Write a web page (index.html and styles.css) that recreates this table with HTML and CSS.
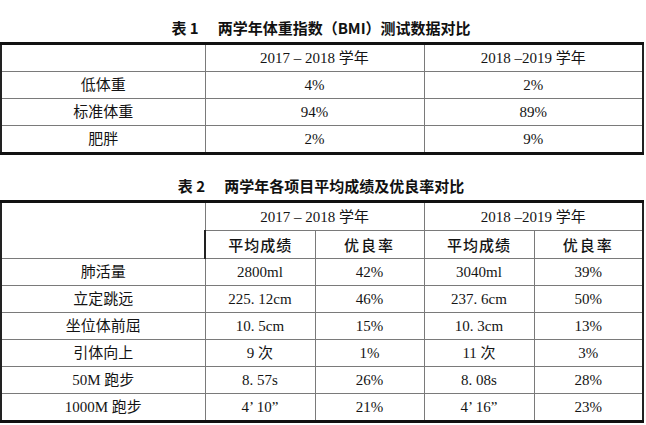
FILE: index.html
```html
<!DOCTYPE html>
<html lang="zh-CN">
<head>
<meta charset="utf-8">
<title>两学年体测数据对比</title>
<link rel="stylesheet" href="styles.css">
</head>
<body>
<div class="page">
  <div class="caption caption-1"><span class="cap-no">表 1</span><span class="cap-text">两学年体重指数（BMI）测试数据对比</span></div>
  <table class="data t1">
    <colgroup><col class="c-name"><col class="c-year"><col class="c-year"></colgroup>
    <tr class="head"><td></td><td>2017 – 2018 学年</td><td>2018 –2019 学年</td></tr>
    <tr><td>低体重</td><td>4%</td><td>2%</td></tr>
    <tr><td>标准体重</td><td>94%</td><td>89%</td></tr>
    <tr><td>肥胖</td><td>2%</td><td>9%</td></tr>
  </table>

  <div class="caption caption-2"><span class="cap-no">表 2</span><span class="cap-text">两学年各项目平均成绩及优良率对比</span></div>
  <table class="data t2">
    <colgroup><col class="c-name"><col class="c-sub"><col class="c-sub2"><col class="c-sub"><col class="c-sub2"></colgroup>
    <tr class="head"><td rowspan="2"></td><td colspan="2">2017 – 2018 学年</td><td colspan="2">2018 –2019 学年</td></tr>
    <tr class="head sub"><td class="hz">平均成绩</td><td class="hz sp">优良率</td><td class="hz">平均成绩</td><td class="hz sp">优良率</td></tr>
    <tr><td>肺活量</td><td>2800ml</td><td>42%</td><td>3040ml</td><td>39%</td></tr>
    <tr><td>立定跳远</td><td>225. 12cm</td><td>46%</td><td>237. 6cm</td><td>50%</td></tr>
    <tr><td>坐位体前屈</td><td>10. 5cm</td><td>15%</td><td>10. 3cm</td><td>13%</td></tr>
    <tr><td>引体向上</td><td>9 次</td><td>1%</td><td>11 次</td><td>3%</td></tr>
    <tr><td>50M 跑步</td><td>8. 57s</td><td>26%</td><td>8. 08s</td><td>28%</td></tr>
    <tr><td>1000M 跑步</td><td>4’ 10”</td><td>21%</td><td>4’ 16”</td><td>23%</td></tr>
  </table>
</div>
</body>
</html>
```

FILE: styles.css
```css
html, body {
  margin: 0;
  padding: 0;
  background: #ffffff;
}

.page {
  width: 642px;
  padding-top: 14px;
  font-family: "Liberation Serif", "Noto Sans CJK SC", serif;
  color: #141414;
}

.caption {
  height: 28px;
  line-height: 28px;
  text-align: center;
  font-family: "Noto Sans CJK SC", sans-serif;
  font-weight: 700;
  font-size: 15px;
  color: #111;
}

.caption .cap-no {
  margin-right: 19px;
}

.caption-2 {
  margin-top: 17px;
}

.data {
  width: 642px;
  border-collapse: collapse;
  table-layout: fixed;
  border-top: 3px solid #111;
  border-bottom: 3px solid #111;
  border-left: 2px solid #222;
  border-right: 2px solid #222;
  font-size: 15px;
}

.data td {
  border: 1px solid #7a7a7a;
  padding: 0;
  height: 26px;
  text-align: center;
  vertical-align: middle;
  line-height: 18px;
}

.t2 .head td {
  height: 27px;
}

.data tr:first-child td {
  border-top: 3px solid #111;
}

.data tr:last-child td {
  border-bottom: 3px solid #111;
}

.data td:first-child {
  border-left: 2px solid #222;
}

.data td:last-child {
  border-right: 2px solid #222;
}

.c-name { width: 204px; }
.t1 .c-year { width: 219px; }
.t2 .c-sub { width: 110px; }
.t2 .c-sub2 { width: 109px; }

.data .hz {
  font-family: "Noto Sans CJK SC", sans-serif;
  font-weight: 500;
  letter-spacing: 1px;
}

.data .hz.sp {
  letter-spacing: 2px;
}
```
